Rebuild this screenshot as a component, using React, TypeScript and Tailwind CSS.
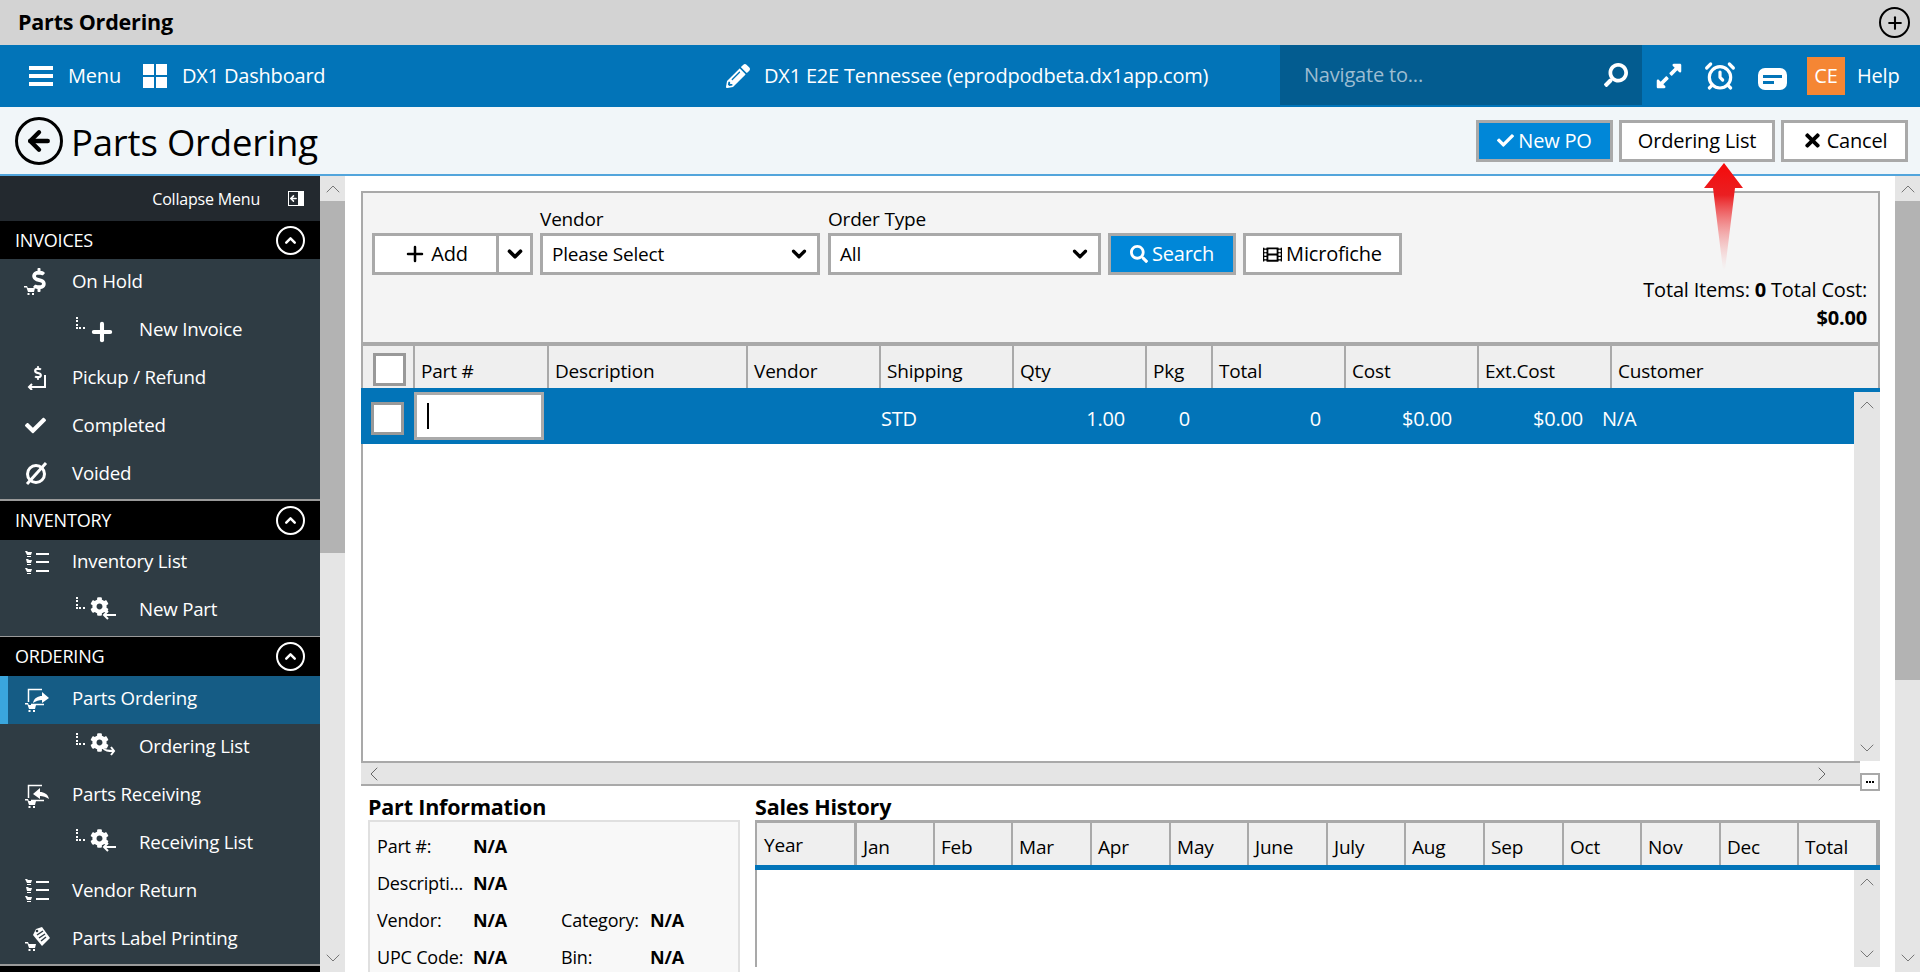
import { AlarmClock, ArrowLeft, ChevronDown, ChevronLeft, ChevronRight, ChevronUp, Plus } from "lucide-react"
import { FaCheck, FaCog, FaDollarSign, FaExpandAlt, FaFilm, FaPencilAlt, FaSearch, FaTimes } from "react-icons/fa"
import type { ReactNode } from "react"

const Cart = () => (
  <g fill="white" stroke="none">
    <path d="M0 15h3l.8 2H11l-1 4H4L2.500 16.500H0z" />
    <rect x="3.500" y="22" width="2" height="2" />
    <rect x="8" y="22" width="2" height="2" />
  </g>
)

function TreeMark() {
  return <span className="absolute left-[1px] top-[1px] h-[12px] w-[9px] border-l-2 border-b-2 border-dotted border-white" />
}

function SubMark({ dir }: { dir: "in" | "out" }) {
  return (
    <span className="relative block w-[42px] h-[30px] -mt-[2px]">
      <TreeMark />
      <FaCog className="absolute left-[15px] top-[1px] text-white" size={19} />
      <svg className="absolute left-[27px] top-[14px]" width="14" height="10" viewBox="0 0 14 10" fill="none" stroke="white" strokeWidth="2">
        {dir === "in" ? <path d="M14 5H2M6 1 2 5l4 4" /> : <path d="M0 1c3 4 6 4 12 4M9 1l3 4-3 4" />}
      </svg>
    </span>
  )
}

function ListIcon() {
  return (
    <svg width="24" height="24" viewBox="0 0 24 24" fill="white" className="-mt-[2px]">
      <rect x="11" y="2" width="13" height="2" />
      <rect x="11" y="10" width="13" height="2" />
      <rect x="11" y="19" width="13" height="2" />
      <path d="M0 0h2l1 1h4l-1 3H2zM1 8h2l1 1h3l-1 3H2zM0 17h2l1 1h4l-1 3H2z" />
      <rect x="2" y="5" width="4" height="1" />
      <rect x="2" y="13" width="4" height="1" />
      <rect x="2" y="22" width="4" height="1" />
    </svg>
  )
}

function DocArrow({ flip }: { flip?: boolean }) {
  return (
    <svg width="25" height="24" viewBox="0 0 25 24" fill="none" stroke="white" strokeWidth="1.500">
      <path d="M3.500 14V1.500H17M6 16.500H19" />
      <path
        d={flip ? "M24 15c-1-5-5-7-9-7V4L8 10l7 5v-3c3 0 6 1 9 3z" : "M8 15c1-5 5-7 9-7V4l7 6-7 5v-3c-3 0-6 1-9 3z"}
        fill="white"
        stroke="none"
      />
      <Cart />
    </svg>
  )
}

function SectionHead({ label, sep }: { label: string; sep?: string }) {
  return (
    <div className={`${sep ?? "h-[38px]"} bg-black border-[#9a9a9a] flex items-center justify-between px-[15px] text-white text-[18px]`}>
      <span>{label}</span>
      <span className="w-[29px] h-[29px] rounded-full border-[2.5px] border-white flex items-center justify-center">
        <ChevronUp size={17} strokeWidth={3.5} />
      </span>
    </div>
  )
}

function MenuRow({ icon, label, sub, active, nudge }: { icon: ReactNode; label: string; sub?: boolean; active?: boolean; nudge?: boolean }) {
  return (
    <div className={`h-[48px] flex items-center text-white text-[18.700px] ${active ? "bg-[#155c85] border-l-[8px] border-[#3aa6dd] pl-[17px]" : sub ? "pl-[75px]" : "pl-[25px]"}`}>
      <span className={`${sub ? "w-[64px]" : "w-[47px]"} shrink-0 flex items-center`}>{icon}</span>
      <span className={nudge ? "-mt-[6px]" : "-mt-[4px]"}>{label}</span>
    </div>
  )
}

function Scrollbar({ thumbH }: { thumbH: string }) {
  return (
    <div className="relative w-[25px] shrink-0 bg-[#e5e5e5] text-[#777] h-[796px]">
      <div className="h-[25px] flex items-center justify-center"><ChevronUp size={24} strokeWidth={1} /></div>
      <div className={`${thumbH} bg-[#b3b3b3]`} />
      <div className="absolute top-[770px] w-full flex justify-center"><ChevronDown size={24} strokeWidth={1} /></div>
    </div>
  )
}

function ToolBtn({ children, w, blue }: { children: ReactNode; w: string; blue?: boolean }) {
  return (
    <div className={`${w} h-[42px] border-[3px] border-[#a9a9a9] flex items-center justify-center gap-[4px] text-[20px] ${blue ? "bg-[#0087d8] text-white" : "bg-white text-black"}`}>
      {children}
    </div>
  )
}

const gridCols = [
  { label: "", w: "w-[52px]" },
  { label: "Part #", w: "w-[134px]" },
  { label: "Description", w: "w-[199px]" },
  { label: "Vendor", w: "w-[133px]" },
  { label: "Shipping", w: "w-[133px]" },
  { label: "Qty", w: "w-[133px]" },
  { label: "Pkg", w: "w-[66px]" },
  { label: "Total", w: "w-[133px]" },
  { label: "Cost", w: "w-[133px]" },
  { label: "Ext.Cost", w: "w-[133px]" },
]

const salesCols = [
  { label: "Jan", w: "w-[78px]" },
  { label: "Feb", w: "w-[78px]" },
  { label: "Mar", w: "w-[79px]" },
  { label: "Apr", w: "w-[79px]" },
  { label: "May", w: "w-[78px]" },
  { label: "June", w: "w-[79px]" },
  { label: "July", w: "w-[78px]" },
  { label: "Aug", w: "w-[79px]" },
  { label: "Sep", w: "w-[79px]" },
  { label: "Oct", w: "w-[78px]" },
  { label: "Nov", w: "w-[79px]" },
  { label: "Dec", w: "w-[78px]" },
  { label: "Total", w: "w-[79px]" },
]

export default function App() {
  return (
    <div className="relative w-[1920px] h-[972px] overflow-hidden flex flex-col bg-white text-black font-['Open_Sans',sans-serif] tracking-[-0.012em]">
      {/* title bar */}
      <div className="h-[45px] shrink-0 bg-[#d3d3d3] flex items-center justify-between pl-[18px] pr-[10px]">
        <span className="text-[21.500px] font-bold">Parts Ordering</span>
        <span className="w-[31px] h-[31px] rounded-full border-2 border-black flex items-center justify-center"><Plus size={20} strokeWidth={2.5} /></span>
      </div>

      {/* nav */}
      <div className="h-[62px] shrink-0 bg-[#0274b8] flex items-center text-white text-[20px]">
        <div className="ml-[29px] w-[24px] flex flex-col gap-[4px]">
          <span className="h-[4px] bg-white" /><span className="h-[4px] bg-white" /><span className="h-[4px] bg-white" />
        </div>
        <span className="ml-[15px] w-[75px]">Menu</span>
        <div className="w-[24px] h-[24px] grid grid-cols-2 gap-[2px]">
          <span className="bg-white" /><span className="bg-white" /><span className="bg-white" /><span className="bg-white" />
        </div>
        <span className="ml-[15px] w-[543px]">DX1 Dashboard</span>
        <FaPencilAlt size={24} className="w-[26px]" />
        <span className="ml-[13px] w-[516px]">DX1 E2E Tennessee (eprodpodbeta.dx1app.com)</span>
        <div className="w-[362px] h-[60px] self-start bg-[#035c90] flex items-center justify-between pl-[24px] pr-[14px]">
          <span className="text-[#9dbdd2]">Navigate to...</span>
          <FaSearch size={24} className="-scale-x-100" />
        </div>
        <span className="w-[52px] flex justify-center"><FaExpandAlt size={28} className="ml-[1px]" /></span>
        <span className="w-[52px] flex justify-center"><AlarmClock size={32} strokeWidth={2.4} /></span>
        <span className="w-[52px] flex justify-center">
          <span className="mt-[6px] w-[29px] h-[22px] rounded-[7px] bg-white flex flex-col justify-center gap-[3px] pl-[5px]">
            <span className="h-[3px] w-[19px] bg-[#0274b8]" /><span className="h-[3px] w-[11px] bg-[#0274b8]" />
          </span>
        </span>
        <span className="ml-[9px] w-[38px] h-[38px] bg-[#f58634] flex items-center justify-center">CE</span>
        <span className="ml-[12px]">Help</span>
      </div>

      {/* page header */}
      <div className="h-[69px] shrink-0 bg-[#f1f6f9] border-b-2 border-[#52a5dc] flex items-center justify-between pl-[15px] pr-[12px]">
        <div className="flex items-center">
          <span className="w-[48px] h-[48px] rounded-full border-[3px] border-black flex items-center justify-center"><ArrowLeft size={30} strokeWidth={3.5} /></span>
          <span className="ml-[8px] mt-[2px] text-[36.500px] leading-[48px]">Parts Ordering</span>
        </div>
        <div className="flex gap-[6px]">
          <ToolBtn w="w-[137px]" blue><FaCheck size={17} />New PO</ToolBtn>
          <ToolBtn w="w-[156px]">Ordering List</ToolBtn>
          <ToolBtn w="w-[127px]"><FaTimes size={21} />Cancel</ToolBtn>
        </div>
      </div>

      <div className="flex flex-1 min-h-0">
        {/* sidebar */}
        <aside className="w-[320px] shrink-0 bg-[#2f3c44] overflow-hidden">
          <div className="h-[45px] bg-[#23292f] flex items-center justify-end text-white text-[16px] pr-[16px]">
            <span>Collapse Menu</span>
            <span className="ml-[28px] w-[16px] h-[15px] border border-white bg-white flex">
              <span className="w-[9px] h-full bg-[#23292f] flex items-center text-white"><ArrowLeft size={9} strokeWidth={4} /></span>
            </span>
          </div>
          <SectionHead label="INVOICES" />
          <MenuRow
            label="On Hold"
            icon={
              <span className="relative block w-[26px] h-[26px] -mt-[4px] -ml-[1px]">
                <FaDollarSign size={24} className="absolute left-[3px] top-0 text-white" />
                <svg width="13" height="24" viewBox="0 0 13 24" className="absolute left-0 top-[3px]"><Cart /></svg>
              </span>
            }
          />
          <MenuRow sub label="New Invoice" icon={<span className="relative block w-[42px] h-[30px]"><TreeMark /><Plus size={28} strokeWidth={3.5} className="absolute left-[13px] top-[2px] text-white" /></span>} />
          <MenuRow label="Pickup / Refund" icon={<span className="relative block w-[24px] h-[24px] -mt-[3px]"><FaDollarSign size={14} className="absolute left-[6px] top-0 text-white" /><svg width="24" height="24" className="absolute inset-0" fill="none" stroke="white" strokeWidth="2"><path d="M20 9v12H4M7 18l-3 3 3 3" /></svg></span>} />
          <MenuRow label="Completed" icon={<FaCheck size={21} className="-mt-[3px] text-white" />} />
          <MenuRow label="Voided" icon={<svg width="24" height="26" viewBox="0 0 24 26" fill="none" stroke="white" strokeWidth="3" className="-mt-[3px]"><circle cx="11" cy="13" r="8.500" /><path d="M2 23 21 2" /></svg>} />
          <SectionHead label="INVENTORY" sep="h-[41px] border-t-2" />
          <MenuRow nudge label="Inventory List" icon={<ListIcon />} />
          <MenuRow nudge sub label="New Part" icon={<SubMark dir="in" />} />
          <SectionHead label="ORDERING" sep="h-[40px] border-t" />
          <MenuRow active label="Parts Ordering" icon={<DocArrow />} />
          <MenuRow sub label="Ordering List" icon={<SubMark dir="out" />} />
          <MenuRow label="Parts Receiving" icon={<DocArrow flip />} />
          <MenuRow sub label="Receiving List" icon={<SubMark dir="in" />} />
          <MenuRow label="Vendor Return" icon={<ListIcon />} />
          <MenuRow label="Parts Label Printing" icon={
            <svg width="25" height="24" viewBox="0 0 25 24" className="-mt-[3px]">
              <path d="M11 2l6-2 8 11-8 8L8 8z" fill="white" />
              <path d="M12 8l6-4M14 11l6-4M16 14l5-4" stroke="#2f3c44" strokeWidth="1.500" />
              <circle cx="12" cy="4" r="1.300" fill="#2f3c44" />
              <Cart />
            </svg>
          } />
          <div className="h-[8px] bg-black border-t-2 border-[#9a9a9a]" />
        </aside>
        <Scrollbar thumbH="h-[352px]" />

        {/* main */}
        <main className="flex-1 min-w-0 pl-[16px] pr-[15px] pt-[15px] overflow-hidden">
          <div className="h-[151px] border-2 border-b-0 border-[#a9a9a9] bg-[#f4f4f4] pt-[14px] pl-[9px] pr-[11px] text-[19px]">
            <div className="flex items-end gap-[7px]">
              <div className="w-[161px] h-[42px] border-[3px] border-[#a9a9a9] bg-white flex text-[20px]">
                <div className="w-[124px] flex items-center justify-center gap-[4px] border-r-[3px] border-[#a9a9a9]"><Plus size={24} strokeWidth={2.5} />Add</div>
                <div className="flex-1 flex items-center justify-center"><ChevronDown size={22} strokeWidth={4} /></div>
              </div>
              <div>
                <div className="leading-[24px] mb-[2px]">Vendor</div>
                <div className="w-[280px] h-[42px] border-[3px] border-[#a9a9a9] bg-white flex items-center justify-between pl-[9px] pr-[7px]">Please Select<ChevronDown size={22} strokeWidth={3.5} /></div>
              </div>
              <div className="ml-px">
                <div className="leading-[24px] mb-[2px]">Order Type</div>
                <div className="w-[273px] h-[42px] border-[3px] border-[#a9a9a9] bg-white flex items-center justify-between pl-[9px] pr-[7px]">All<ChevronDown size={22} strokeWidth={3.5} /></div>
              </div>
              <ToolBtn w="w-[128px]" blue><FaSearch size={18} />Search</ToolBtn>
              <ToolBtn w="w-[159px]"><FaFilm size={19} />Microfiche</ToolBtn>
            </div>
            <div className="mt-[1px] text-right leading-[28px] text-[20px]">
              <div>Total Items: <b>0</b> Total Cost:</div>
              <div className="font-bold">$0.00</div>
            </div>
          </div>

          {/* parts grid */}
          <div className="border-x-2 border-[#a9a9a9]">
            <div className="h-[46px] border-t-4 border-[#a9a9a9] bg-[#efefef] flex text-[19px]">
              {gridCols.map((col, i) => (
                <div key={i} className={`${col.w} h-full border-r-2 border-[#a9a9a9] pl-[6px] pt-[12px] leading-[26px] shrink-0`}>
                  {i === 0 ? <span className="block -mt-[5px] ml-[4px] w-[33px] h-[33px] border-[3px] border-[#999] bg-white" /> : col.label}
                </div>
              ))}
              <div className="flex-1 pl-[6px] pt-[12px] leading-[26px]">Customer</div>
            </div>
            <div className="h-[373px] -mx-[2px] border-t-4 border-[#0274b8] flex">
              <div className="flex-1">
                <div className="h-[52px] bg-[#0274b8] text-white text-[20px] flex items-center">
                  <span className="ml-[10px] w-[33px] h-[33px] border-[3px] border-[#999] bg-white shrink-0" />
                  <span className="ml-[10px] w-[130px] h-[48px] self-start border-[3px] border-[#aaa] bg-white flex items-center pl-[10px] shrink-0">
                    <span className="w-[2px] h-[26px] bg-black" />
                  </span>
                  <span className="ml-[337px] w-[132px] pt-[2px]">STD</span>
                  <span className="w-[112px] text-right pt-[2px]">1.00</span>
                  <span className="w-[65px] text-right pt-[2px]">0</span>
                  <span className="w-[131px] text-right pt-[2px]">0</span>
                  <span className="w-[131px] text-right pt-[2px]">$0.00</span>
                  <span className="w-[131px] text-right pt-[2px]">$0.00</span>
                  <span className="ml-[19px] pt-[2px]">N/A</span>
                </div>
              </div>
              <div className="w-[26px] bg-[#e5e5e5] text-[#777] flex flex-col items-center justify-between py-[1px]">
                <ChevronUp size={24} strokeWidth={1} />
                <ChevronDown size={24} strokeWidth={1} />
              </div>
            </div>
            <div className="relative h-[25px] -mx-[2px] bg-[#e5e5e5] border-y-2 border-[#a9a9a9] text-[#666] flex items-center justify-between pl-[1px] pr-[46px]">
              <ChevronLeft size={24} strokeWidth={1} />
              <ChevronRight size={24} strokeWidth={1} />
              <span className="absolute right-0 -top-[2px] h-[12px] w-[20px] bg-white" />
              <span className="absolute right-0 top-[10px] w-[20px] h-[18px] border-2 border-[#a9a9a9] bg-white flex items-center justify-center gap-[1px]">
                <span className="w-[2px] h-[2px] bg-black" /><span className="w-[2px] h-[2px] bg-black" /><span className="w-[2px] h-[2px] bg-black" />
              </span>
            </div>
          </div>

          {/* bottom panels */}
          <div className="flex mt-[7px]">
            <div className="ml-[7px] w-[372px]">
              <div className="h-[27px] leading-[27px] text-[21.500px] font-bold">Part Information</div>
              <div className="h-[200px] border-2 border-[#e0e0e0] bg-[#f8f8f8] pl-[7px] pt-[6px] text-[18px]">
                <div className="h-[37px] flex items-center"><span className="w-[96px]">Part #:</span><b>N/A</b></div>
                <div className="h-[37px] flex items-center"><span className="w-[96px]">Descripti...</span><b>N/A</b></div>
                <div className="h-[37px] flex items-center"><span className="w-[96px]">Vendor:</span><b className="w-[88px]">N/A</b><span className="w-[89px]">Category:</span><b>N/A</b></div>
                <div className="h-[37px] flex items-center"><span className="w-[96px]">UPC Code:</span><b className="w-[88px]">N/A</b><span className="w-[89px]">Bin:</span><b>N/A</b></div>
              </div>
            </div>
            <div className="ml-[15px] flex-1 min-w-0">
              <div className="h-[27px] leading-[27px] text-[21.500px] font-bold">Sales History</div>
              <div className="border-t-[3px] border-x-2 border-[#a9a9a9]">
                <div className="h-[42px] bg-[#efefef] flex text-[19px]">
                  <div className="w-[100px] border-r-[3px] border-[#a9a9a9] pl-[7px] pt-[9px] leading-[26px]">Year</div>
                  {salesCols.map((col) => (
                    <div key={col.label} className={`${col.w} shrink-0 border-r-2 border-[#a9a9a9] pl-[6px] pt-[11px] leading-[26px]`}>{col.label}</div>
                  ))}
                </div>
                <div className="h-[102px] -mx-[2px] border-t-[5px] border-[#0274b8] flex justify-end">
                  <div className="w-[26px] bg-[#e5e5e5] text-[#777] flex flex-col items-center justify-between pb-[1px]">
                    <ChevronUp size={24} strokeWidth={1} />
                    <ChevronDown size={24} strokeWidth={1} />
                  </div>
                </div>
              </div>
            </div>
          </div>
        </main>
        <Scrollbar thumbH="h-[479px]" />
      </div>

      {/* red pointer */}
      <svg className="absolute left-[1700px] top-[160px]" width="48" height="114" viewBox="0 0 48 114">
        <defs>
          <linearGradient id="ptr" x1="0" y1="0" x2="0" y2="1">
            <stop offset="0" stopColor="#f50a0a" />
            <stop offset="0.3" stopColor="#ea1f22" />
            <stop offset="1" stopColor="#f7a0a0" stopOpacity="0" />
          </linearGradient>
        </defs>
        <path d="M24 3 43 28H35L25 110H23L13 28H4Z" fill="url(#ptr)" />
      </svg>
    </div>
  )
}
